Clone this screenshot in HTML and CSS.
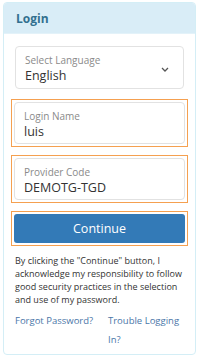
FILE: index.html
```html
<!DOCTYPE html>
<html>
<head>
<meta charset="utf-8">
<link rel="stylesheet" href="styles.css">
</head>
<body>
<div class="card">
  <div class="card-head">Login</div>
  <div class="card-body">
    <div class="field select">
      <div class="field-text">
        <div class="label">Select Language</div>
        <div class="value">English</div>
      </div>
      <svg class="chev" width="8" height="5" viewBox="0 0 8 5"><path d="M1 1 L4 4 L7 1" fill="none" stroke="#555" stroke-width="1.3"/></svg>
    </div>
    <div class="focus-ring">
      <div class="field">
        <div class="label">Login Name</div>
        <div class="value">luis</div>
      </div>
    </div>
    <div class="focus-ring">
      <div class="field">
        <div class="label">Provider Code</div>
        <div class="value">DEMOTG-TGD</div>
      </div>
    </div>
    <div class="focus-ring btn-ring">
      <button class="btn">Continue</button>
    </div>
    <p class="note">By clicking the "Continue" button, I acknowledge my responsibility to follow good security practices in the selection and use of my password.</p>
    <div class="links">
      <a class="link forgot" href="#">Forgot Password?</a>
      <a class="link trouble" href="#">Trouble Logging In?</a>
    </div>
  </div>
</div>
</body>
</html>
```
FILE: styles.css
```css
html, body { margin: 0; padding: 0; background: #fff; }
body { font-family: "Open Sans", "Noto Sans", sans-serif; color: #333; }
.card {
  margin: 2px 3px 0 3px;
  width: 193px;
  height: 353px;
  border: 1px solid #d4eef6;
  border-radius: 4px;
  box-sizing: border-box;
  overflow: hidden;
}
.card-head {
  background: #d9edf7;
  color: #31708f;
  font-weight: 700;
  font-size: 12px;
  height: 31px;
  line-height: 31px;
  padding-left: 12px;
  border-bottom: 1px solid #e3f2f9;
  box-sizing: border-box;
}
.card-body { padding: 12px 11px 0 11px; }
.field {
  border: 1px solid #e2e2e2;
  border-radius: 4px;
  height: 42px;
  box-sizing: border-box;
  padding: 6px 9px 0 9px;
}
.select { display: flex; align-items: center; justify-content: space-between; padding-top: 1px; height: 43px; margin-bottom: 10px; }
.chev { margin-right: 5px; margin-top: 2px; }
.label { font-size: 10px; color: #8a8a8a; line-height: 14px; }
.value { font-size: 12.5px; color: #333; line-height: 17px; }
.focus-ring {
  border: 1.5px solid #f5a050;
  padding: 2px;
  margin: 0 -4px 8px -4px;
}
.btn-ring { margin-top: 0; }
.btn {
  display: block;
  width: 100%;
  height: 29px;
  background: #337ab7;
  color: #fff;
  border: none;
  border-radius: 3px;
  font-family: inherit;
  font-size: 12.5px;
  padding: 0;
}
.note {
  font-size: 9px;
  line-height: 13px;
  color: #333;
  margin: 6px 0 0 0;
}
.links { display: flex; margin-top: 5px; font-size: 9.5px; line-height: 19px; }
.link { color: #4a76a8; text-decoration: none; }
.forgot { width: 93px; flex: none; }
.trouble { width: 80px; }
```
